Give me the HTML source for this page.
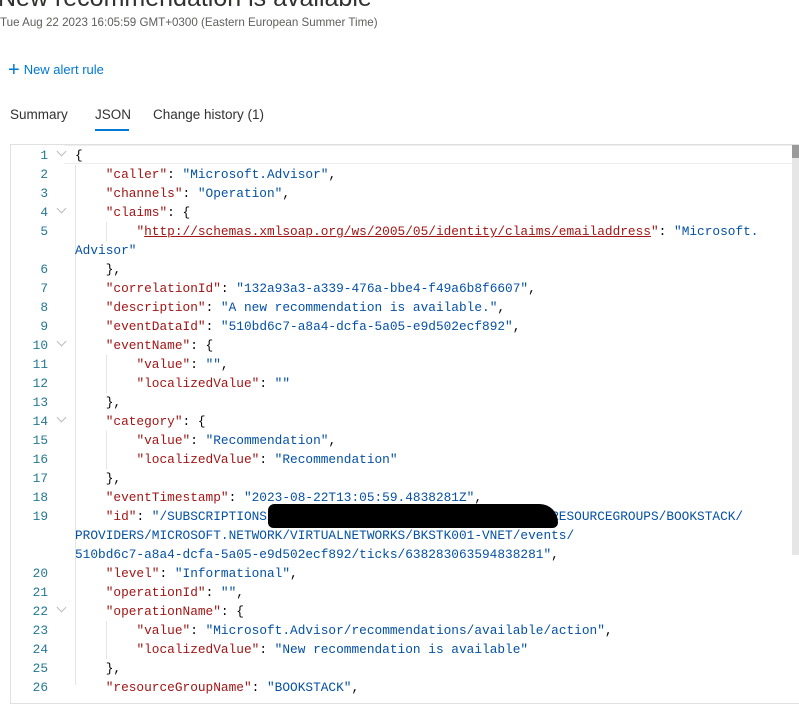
<!DOCTYPE html>
<html><head><meta charset="utf-8"><style>
*{margin:0;padding:0;box-sizing:border-box}
body{width:799px;height:685px;overflow:hidden;background:#fff;font-family:"Liberation Sans",sans-serif;position:relative}
.title{position:absolute;left:-2px;top:-16px;font-size:25px;color:#323130;white-space:nowrap}
.date{position:absolute;left:0;top:16px;font-size:11.6px;color:#605e5c}
.alert{position:absolute;left:8px;top:57px;font-size:13px;color:#0078d4}
.alert b{font-weight:normal;font-size:20px;position:relative;top:2px;margin-right:4px}
.tab{position:absolute;top:107px;font-size:13.5px;color:#323130}
.ul{position:absolute;left:95px;top:129px;width:34px;height:2px;background:#0078d4}
.ed{position:absolute;left:10px;top:144px;width:789px;height:560px;border:1px solid #e0e0e0;border-right:none}
.cur{position:absolute;left:64px;top:145px;width:729px;height:19px;border-top:1px solid #eee;border-bottom:1px solid #eee}
.sb{position:absolute;left:792px;top:145px;width:7px;height:410px;background:#e6e6e6}
.th{position:absolute;left:792px;top:145px;width:7px;height:13px;background:#9a9a9a}
.l{position:absolute;left:0;height:19px;line-height:19px;font-family:"Liberation Mono",monospace;font-size:12.8px;white-space:pre;color:#000}
.n{position:absolute;width:48px;text-align:right;color:#237893}
.c{position:absolute;left:75px}
.f{position:absolute;left:58px;top:2px;width:7px;height:7px;border-right:1px solid #bbb;border-bottom:1px solid #bbb;transform:rotate(45deg)}
.k{color:#a31515}.s{color:#0451a5}
.g{position:absolute;width:1px;background:#e4e4e4}
</style></head><body>
<div class="title">New recommendation is available</div>
<div class="date">Tue Aug 22 2023 16:05:59 GMT+0300 (Eastern European Summer Time)</div>
<div class="alert"><b>+</b>New alert rule</div>
<div class="tab" style="left:10px">Summary</div>
<div class="tab" style="left:95px">JSON</div>
<div class="tab" style="left:153px">Change history (1)</div>
<div class="ul"></div>
<div class="ed"></div>
<div class="cur"></div>
<div class="sb"></div><div class="th"></div>
<div class="g" style="left:75px;top:165px;height:520px"></div>
<div class="g" style="left:106px;top:222px;height:19px"></div>
<div class="g" style="left:106px;top:355px;height:38px"></div>
<div class="g" style="left:106px;top:431px;height:38px"></div>
<div class="g" style="left:106px;top:621px;height:38px"></div>
<div style="position:absolute;left:0;top:146px;width:799px">
<div class="l" style="top:0"><span class="n">1</span><i class="f"></i><span class="c">{</span></div>
<div class="l" style="top:19px"><span class="n">2</span><span class="c">    <span class="k">"caller"</span>: <span class="s">"Microsoft.Advisor"</span>,</span></div>
<div class="l" style="top:38px"><span class="n">3</span><span class="c">    <span class="k">"channels"</span>: <span class="s">"Operation"</span>,</span></div>
<div class="l" style="top:57px"><span class="n">4</span><i class="f"></i><span class="c">    <span class="k">"claims"</span>: {</span></div>
<div class="l" style="top:76px"><span class="n">5</span><span class="c">        <span class="k">"<u>http://schemas.xmlsoap.org/ws/2005/05/identity/claims/emailaddress</u>"</span>: <span class="s">"Microsoft.</span></span></div>
<div class="l" style="top:95px"><span class="c"><span class="s">Advisor"</span></span></div>
<div class="l" style="top:114px"><span class="n">6</span><span class="c">    },</span></div>
<div class="l" style="top:133px"><span class="n">7</span><span class="c">    <span class="k">"correlationId"</span>: <span class="s">"132a93a3-a339-476a-bbe4-f49a6b8f6607"</span>,</span></div>
<div class="l" style="top:152px"><span class="n">8</span><span class="c">    <span class="k">"description"</span>: <span class="s">"A new recommendation is available."</span>,</span></div>
<div class="l" style="top:171px"><span class="n">9</span><span class="c">    <span class="k">"eventDataId"</span>: <span class="s">"510bd6c7-a8a4-dcfa-5a05-e9d502ecf892"</span>,</span></div>
<div class="l" style="top:190px"><span class="n">10</span><i class="f"></i><span class="c">    <span class="k">"eventName"</span>: {</span></div>
<div class="l" style="top:209px"><span class="n">11</span><span class="c">        <span class="k">"value"</span>: <span class="s">""</span>,</span></div>
<div class="l" style="top:228px"><span class="n">12</span><span class="c">        <span class="k">"localizedValue"</span>: <span class="s">""</span></span></div>
<div class="l" style="top:247px"><span class="n">13</span><span class="c">    },</span></div>
<div class="l" style="top:266px"><span class="n">14</span><i class="f"></i><span class="c">    <span class="k">"category"</span>: {</span></div>
<div class="l" style="top:285px"><span class="n">15</span><span class="c">        <span class="k">"value"</span>: <span class="s">"Recommendation"</span>,</span></div>
<div class="l" style="top:304px"><span class="n">16</span><span class="c">        <span class="k">"localizedValue"</span>: <span class="s">"Recommendation"</span></span></div>
<div class="l" style="top:323px"><span class="n">17</span><span class="c">    },</span></div>
<div class="l" style="top:342px"><span class="n">18</span><span class="c">    <span class="k">"eventTimestamp"</span>: <span class="s">"2023-08-22T13:05:59.4838281Z"</span>,</span></div>
<div class="l" style="top:361px"><span class="n">19</span><span class="c">    <span class="k">"id"</span>: <span class="s">"/SUBSCRIPTIONS/00000000-0000-0000-0000-00000000000/RESOURCEGROUPS/BOOKSTACK/</span></span></div>
<div class="l" style="top:380px"><span class="c"><span class="s">PROVIDERS/MICROSOFT.NETWORK/VIRTUALNETWORKS/BKSTK001-VNET/events/</span></span></div>
<div class="l" style="top:399px"><span class="c"><span class="s">510bd6c7-a8a4-dcfa-5a05-e9d502ecf892/ticks/638283063594838281"</span>,</span></div>
<div class="l" style="top:418px"><span class="n">20</span><span class="c">    <span class="k">"level"</span>: <span class="s">"Informational"</span>,</span></div>
<div class="l" style="top:437px"><span class="n">21</span><span class="c">    <span class="k">"operationId"</span>: <span class="s">""</span>,</span></div>
<div class="l" style="top:456px"><span class="n">22</span><i class="f"></i><span class="c">    <span class="k">"operationName"</span>: {</span></div>
<div class="l" style="top:475px"><span class="n">23</span><span class="c">        <span class="k">"value"</span>: <span class="s">"Microsoft.Advisor/recommendations/available/action"</span>,</span></div>
<div class="l" style="top:494px"><span class="n">24</span><span class="c">        <span class="k">"localizedValue"</span>: <span class="s">"New recommendation is available"</span></span></div>
<div class="l" style="top:513px"><span class="n">25</span><span class="c">    },</span></div>
<div class="l" style="top:532px"><span class="n">26</span><span class="c">    <span class="k">"resourceGroupName"</span>: <span class="s">"BOOKSTACK"</span>,</span></div>
</div>
<div style="position:absolute;left:268px;top:504px;width:290px;height:24px;background:#000;border-radius:14px 40px 12px 12px"></div>
</body></html>
